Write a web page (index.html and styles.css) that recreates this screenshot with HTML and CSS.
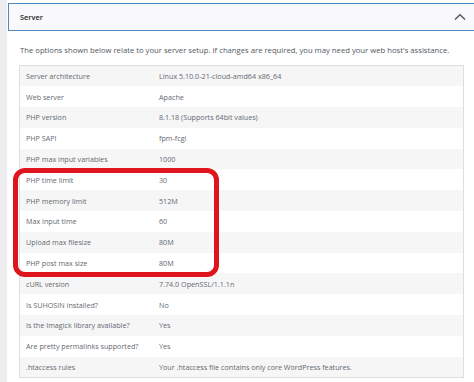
FILE: index.html
```html
<html>
<head>
	<title>Site Health - Info</title>
	<link rel="stylesheet" href="styles.css">
</head>
<body>
	<div class="sidebar"></div>
	<div class="panel">
		<div class="section-head">
			<span class="section-title">Server</span>
			<svg class="chevron" width="12" height="8" viewBox="0 0 12 8">
				<path d="M1 6.5 L6 1.8 L11 6.5" fill="none" stroke="#50575e" stroke-width="1.4"/>
			</svg>
		</div>
		<div class="section-body">
			<p class="intro">The options shown below relate to your server setup. If changes are required, you may need your web host's assistance.</p>
			<table class="info">
				<tr><td class="label">Server architecture</td><td>Linux 5.10.0-21-cloud-amd64 x86_64</td></tr>
				<tr><td class="label">Web server</td><td>Apache</td></tr>
				<tr><td class="label">PHP version</td><td>8.1.18 (Supports 64bit values)</td></tr>
				<tr><td class="label">PHP SAPI</td><td>fpm-fcgi</td></tr>
				<tr><td class="label">PHP max input variables</td><td>1000</td></tr>
				<tr><td class="label">PHP time limit</td><td>30</td></tr>
				<tr><td class="label">PHP memory limit</td><td>512M</td></tr>
				<tr><td class="label">Max input time</td><td>60</td></tr>
				<tr><td class="label">Upload max filesize</td><td>80M</td></tr>
				<tr><td class="label">PHP post max size</td><td>80M</td></tr>
				<tr><td class="label">cURL version</td><td>7.74.0 OpenSSL/1.1.1n</td></tr>
				<tr><td class="label">Is SUHOSIN installed?</td><td>No</td></tr>
				<tr><td class="label">Is the Imagick library available?</td><td>Yes</td></tr>
				<tr><td class="label">Are pretty permalinks supported?</td><td>Yes</td></tr>
				<tr><td class="label">.htaccess rules</td><td>Your .htaccess file contains only core WordPress features.</td></tr>
			</table>
		</div>
		<div class="highlight"></div>
	</div>
</body>
</html>
```

FILE: styles.css
```css
body {
	margin: 0;
	display: flex;
	height: 382px;
	overflow: hidden;
	font-family: "Open Sans", sans-serif;
	font-size: 7.7px;
	color: #50575e;
	background: #fff;
}

.sidebar {
	width: 7px;
	background: #eeeef0;
	flex-shrink: 0;
}

.panel {
	flex: 1;
	position: relative;
	padding-left: 1px;
}

.section-head {
	margin-top: 3px;
	height: 26px;
	display: flex;
	align-items: center;
	justify-content: space-between;
	padding: 0 8px 0 11px;
	border: 1.5px solid #4f88bd;
	border-right: none;
	background: #f9f8fa;
}

.section-title {
	font-weight: 600;
	font-size: 7.4px;
	color: #1d2327;
}

.section-body {
	padding: 0 9px 0 11px;
}

.intro {
	margin: 13px 0 9px 1px;
	line-height: 12px;
	white-space: nowrap;
}

.info {
	width: 445px;
	border-collapse: collapse;
	border: 1px solid #dedee0;
	color: #646970;
	font: inherit;
	font-size: 7.2px;
}

.info td {
	height: 20.8px;
	padding: 0 0 0 6px;
	white-space: nowrap;
}

.info td.label {
	width: 127px;
}

.info tr:nth-child(odd) {
	background: #f6f6f7;
}

.highlight {
	position: absolute;
	left: 6px;
	top: 168px;
	width: 196px;
	height: 99px;
	border: 5px solid #e0141d;
	border-radius: 12px;
}
```
